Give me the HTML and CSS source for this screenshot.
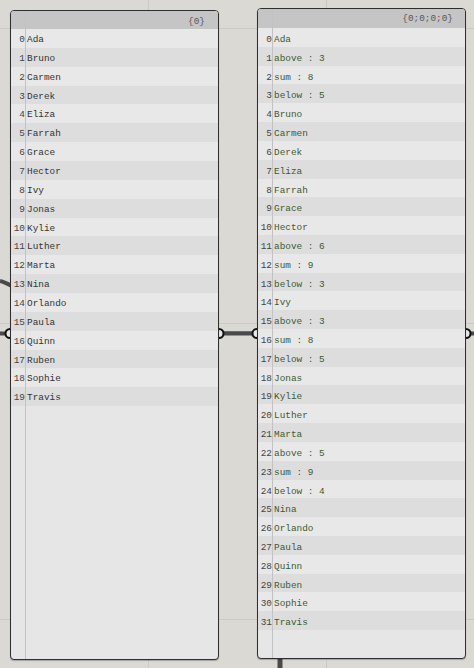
FILE: index.html
```html
<!DOCTYPE html>
<html>
<head>
<meta charset="utf-8">
<link rel="stylesheet" href="styles.css">
</head>
<body>
<div class="canvas">
  <svg class="wires" width="474" height="668" viewBox="0 0 474 668">
    <g stroke="#cdcac5" stroke-width="1">
      <line x1="148.5" y1="0" x2="148.5" y2="668"/>
      <line x1="326.5" y1="0" x2="326.5" y2="668"/>
      <line x1="0" y1="28.5" x2="474" y2="28.5"/>
      <line x1="0" y1="323.5" x2="474" y2="323.5"/>
      <line x1="0" y1="619.5" x2="474" y2="619.5"/>
    </g>
    <g fill="none" stroke="#4a4a4a" stroke-width="4">
      <path d="M0 281 C4 282 8 284 14 287"/>
      <line x1="0" y1="333.5" x2="8" y2="333.5"/>
      <line x1="221" y1="333.5" x2="255" y2="333.5"/>
      <line x1="468" y1="333.5" x2="474" y2="333.5"/>
      <line x1="280" y1="655" x2="280" y2="668" stroke-width="5"/>
    </g>
    <g fill="none" stroke="#6a6a6a" stroke-width="1">
      <line x1="222" y1="331.5" x2="254" y2="331.5"/>
    </g>
    <g fill="#e8e8e8" stroke="#111" stroke-width="2">
      <path d="M10 329 A4.5 4.5 0 0 0 10 338"/>
      <path d="M219 329 A4.5 4.5 0 0 1 219 338"/>
      <path d="M257 329 A4.5 4.5 0 0 0 257 338"/>
      <path d="M466 329 A4.5 4.5 0 0 1 466 338"/>
    </g>
  </svg>

  <div class="panel panel-a">
    <div class="head">{0}</div>
    <div class="rows">
      <div class="row"><span class="idx">0</span><span class="val">Ada</span></div>
      <div class="row"><span class="idx">1</span><span class="val">Bruno</span></div>
      <div class="row"><span class="idx">2</span><span class="val">Carmen</span></div>
      <div class="row"><span class="idx">3</span><span class="val">Derek</span></div>
      <div class="row"><span class="idx">4</span><span class="val">Eliza</span></div>
      <div class="row"><span class="idx">5</span><span class="val">Farrah</span></div>
      <div class="row"><span class="idx">6</span><span class="val">Grace</span></div>
      <div class="row"><span class="idx">7</span><span class="val">Hector</span></div>
      <div class="row"><span class="idx">8</span><span class="val">Ivy</span></div>
      <div class="row"><span class="idx">9</span><span class="val">Jonas</span></div>
      <div class="row"><span class="idx">10</span><span class="val">Kylie</span></div>
      <div class="row"><span class="idx">11</span><span class="val">Luther</span></div>
      <div class="row"><span class="idx">12</span><span class="val">Marta</span></div>
      <div class="row"><span class="idx">13</span><span class="val">Nina</span></div>
      <div class="row"><span class="idx">14</span><span class="val">Orlando</span></div>
      <div class="row"><span class="idx">15</span><span class="val">Paula</span></div>
      <div class="row"><span class="idx">16</span><span class="val">Quinn</span></div>
      <div class="row"><span class="idx">17</span><span class="val">Ruben</span></div>
      <div class="row"><span class="idx">18</span><span class="val">Sophie</span></div>
      <div class="row"><span class="idx">19</span><span class="val">Travis</span></div>
    </div>
  </div>

  <div class="panel panel-b">
    <div class="head">{0;0;0;0}</div>
    <div class="rows">
      <div class="row"><span class="idx">0</span><span class="val">Ada</span></div>
      <div class="row"><span class="idx">1</span><span class="val">above : 3</span></div>
      <div class="row"><span class="idx">2</span><span class="val">sum : 8</span></div>
      <div class="row"><span class="idx">3</span><span class="val">below : 5</span></div>
      <div class="row"><span class="idx">4</span><span class="val">Bruno</span></div>
      <div class="row"><span class="idx">5</span><span class="val">Carmen</span></div>
      <div class="row"><span class="idx">6</span><span class="val">Derek</span></div>
      <div class="row"><span class="idx">7</span><span class="val">Eliza</span></div>
      <div class="row"><span class="idx">8</span><span class="val">Farrah</span></div>
      <div class="row"><span class="idx">9</span><span class="val">Grace</span></div>
      <div class="row"><span class="idx">10</span><span class="val">Hector</span></div>
      <div class="row"><span class="idx">11</span><span class="val">above : 6</span></div>
      <div class="row"><span class="idx">12</span><span class="val">sum : 9</span></div>
      <div class="row"><span class="idx">13</span><span class="val">below : 3</span></div>
      <div class="row"><span class="idx">14</span><span class="val">Ivy</span></div>
      <div class="row"><span class="idx">15</span><span class="val">above : 3</span></div>
      <div class="row"><span class="idx">16</span><span class="val">sum : 8</span></div>
      <div class="row"><span class="idx">17</span><span class="val">below : 5</span></div>
      <div class="row"><span class="idx">18</span><span class="val">Jonas</span></div>
      <div class="row"><span class="idx">19</span><span class="val">Kylie</span></div>
      <div class="row"><span class="idx">20</span><span class="val">Luther</span></div>
      <div class="row"><span class="idx">21</span><span class="val">Marta</span></div>
      <div class="row"><span class="idx">22</span><span class="val">above : 5</span></div>
      <div class="row"><span class="idx">23</span><span class="val">sum : 9</span></div>
      <div class="row"><span class="idx">24</span><span class="val">below : 4</span></div>
      <div class="row"><span class="idx">25</span><span class="val">Nina</span></div>
      <div class="row"><span class="idx">26</span><span class="val">Orlando</span></div>
      <div class="row"><span class="idx">27</span><span class="val">Paula</span></div>
      <div class="row"><span class="idx">28</span><span class="val">Quinn</span></div>
      <div class="row"><span class="idx">29</span><span class="val">Ruben</span></div>
      <div class="row"><span class="idx">30</span><span class="val">Sophie</span></div>
      <div class="row"><span class="idx">31</span><span class="val">Travis</span></div>
    </div>
  </div>
</div>
</body>
</html>
```

FILE: styles.css
```css
html, body {
  margin: 0;
  padding: 0;
  background: #dbd9d4;
}

.canvas {
  position: relative;
  width: 474px;
  height: 668px;
  overflow: hidden;
  display: flex;
  align-items: flex-start;
  gap: 38px;
  padding-left: 10px;
  box-sizing: border-box;
  font-family: "Liberation Mono", "DejaVu Sans Mono", monospace;
  font-size: 9.4px;
}

.wires {
  position: absolute;
  left: 0;
  top: 0;
}

.panel {
  position: relative;
  width: 209px;
  box-sizing: border-box;
  border: 1px solid #2e2e2e;
  border-radius: 4px;
  background: #e6e6e6;
  overflow: hidden;
  display: flex;
  flex-direction: column;
  box-shadow: 0 1px 1px rgba(0,0,0,0.25);
}

.panel::before {
  content: "";
  position: absolute;
  left: 14px;
  top: 0;
  bottom: 0;
  width: 1px;
  background: #c2c2c2;
  z-index: 1;
}

.panel-a {
  margin-top: 10px;
  height: 650px;
}

.panel-b {
  margin-top: 8px;
  height: 651px;
}

.head {
  height: 18px;
  box-sizing: border-box;
  padding-top: 3px;
  background: #c5c5c5;
  color: #585858;
  text-align: right;
  line-height: 15px;
  padding-right: 12px;
  flex: none;
}

.panel-b .head {
  padding-top: 1px;
  height: 19px;
  line-height: 17px;
}

.panel-a .head {
  padding-right: 13px;
}

.row {
  display: flex;
  height: 18.86px;
  box-sizing: border-box;
  padding-top: 4px;
  line-height: 14.86px;
  background: #e8e8e8;
}

.panel-b .row {
  height: 18.82px;
  padding-top: 5px;
  line-height: 13.82px;
}

.row:nth-child(even) {
  background: #dddddd;
}

.idx {
  width: 14px;
  text-align: right;
  color: #444;
  flex: none;
  padding-right: 1px;
}

.val {
  padding-left: 1px;
  color: #333;
  white-space: pre;
}

.panel-b .val {
  color: #3d5a31;
}
```
